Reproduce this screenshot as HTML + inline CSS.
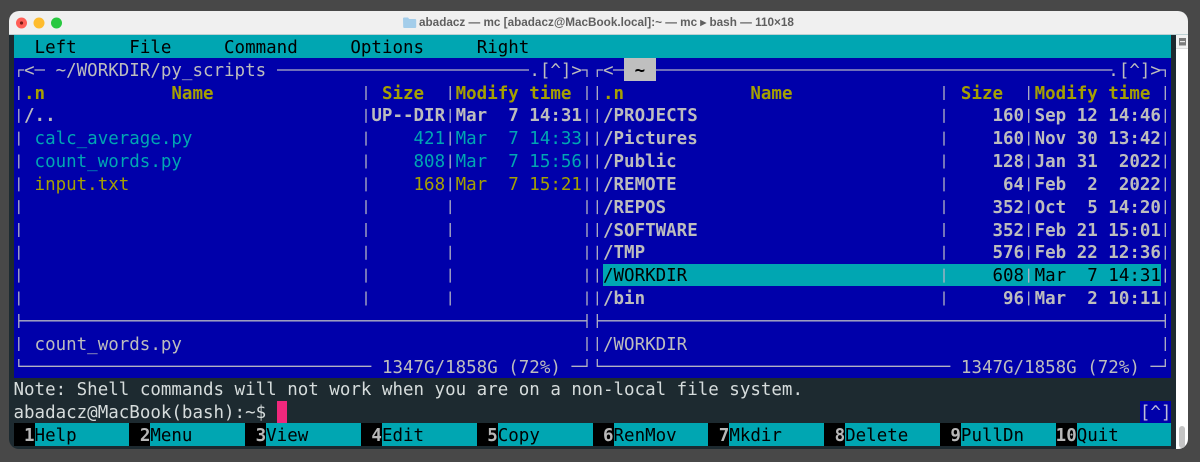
<!DOCTYPE html>
<html><head><meta charset="utf-8"><title>mc</title>
<style>
html,body{margin:0;padding:0;width:1200px;height:462px;overflow:hidden;background:#484848}
div,span,svg{position:absolute}
.win{left:9px;top:11px;width:1179px;height:438px;border-radius:10px;background:#1d2a30;overflow:hidden}
.title{left:0;top:0;width:1179px;height:24px;background:#f0f0f0;border-bottom:1px solid #bcd0d2;box-sizing:border-box}
.ttext{left:410px;top:4px;font:bold 11.72px/16px "Liberation Sans",sans-serif;color:#5f5f5f;white-space:pre}
.sb{left:1167px;top:24px;width:12px;height:414px;background:#fff}
.r{left:0;width:1200px;height:23px;margin-top:2px;font:17.49px/22.83px "DejaVu Sans Mono","Liberation Mono",monospace;color:#bdbdbd;white-space:pre}
.r span{left:calc(var(--c)*10.527px + 13.5px);top:0}
.y{color:#a5a000;font-weight:bold}
.c{color:#00a6b2}
.o{color:#a5a000}
.b{font-weight:bold}
.k{color:#000}
.n{color:#d6dcdc}
.num{color:#b8b8b8;font-weight:bold}
</style></head>
<body>
<div class="win">
  <div class="title"></div>
  <div class="ttext">abadacz — mc [abadacz@MacBook.local]:~ — mc ▸ bash — 110×18</div>
  <div class="sb"></div>
</div>
<svg style="left:0;top:0" width="1200" height="462">
  <circle cx="21.5" cy="23" r="5.5" fill="#ff5f57"/><circle cx="21.5" cy="23" r="1.6" fill="#7a1a14"/>
  <circle cx="39" cy="23" r="5.5" fill="#febc2e"/>
  <circle cx="56.5" cy="23" r="5.5" fill="#28c840"/>
  <path d="M403 18.5a1 1 0 0 1 1-1h4l1.2 1.5h6a1 1 0 0 1 1 1v7a1 1 0 0 1-1 1h-11a1 1 0 0 1-1-1z" fill="#a3cdea"/>
  <rect x="1176" y="35" width="12" height="13" fill="#f2f2f2"/>
  <rect x="1176" y="48" width="12" height="1" fill="#dcdcdc"/>
  <rect x="1179" y="38" width="7" height="7.5" fill="#7c7c7c"/><rect x="1180" y="41" width="5" height="1.2" fill="#e8e8e8"/>
  <rect x="1179" y="426" width="6" height="22" rx="3" fill="#c4c4c4"/>
</svg>

<!-- backgrounds -->
<div style="left:13.5px;top:35px;width:1157.5px;height:23px;background:#00a6b2"></div>
<div style="left:13.5px;top:58px;width:1157.5px;height:319.5px;background:#0000aa"></div>
<div style="left:624px;top:58px;width:31.6px;height:23px;background:#bfbfbf"></div>
<div style="left:603px;top:264px;width:558px;height:22px;background:#00a6b2"></div>
<div style="left:1140px;top:400.6px;width:31px;height:22.8px;background:#0000aa"></div>
<div style="left:276.7px;top:400.6px;width:10px;height:22.8px;background:#f0287c"></div>
<div style="left:13.5px;top:423.4px;width:1157.5px;height:22.8px;background:#00a6b2"></div>
<div style="left:13.5px;top:423.4px;width:21px;height:22.8px;background:#000"></div>
<div style="left:129.3px;top:423.4px;width:21px;height:22.8px;background:#000"></div>
<div style="left:245.1px;top:423.4px;width:21px;height:22.8px;background:#000"></div>
<div style="left:360.9px;top:423.4px;width:21px;height:22.8px;background:#000"></div>
<div style="left:476.7px;top:423.4px;width:21px;height:22.8px;background:#000"></div>
<div style="left:592.5px;top:423.4px;width:21px;height:22.8px;background:#000"></div>
<div style="left:708.3px;top:423.4px;width:21px;height:22.8px;background:#000"></div>
<div style="left:824.1px;top:423.4px;width:21px;height:22.8px;background:#000"></div>
<div style="left:939.9px;top:423.4px;width:21px;height:22.8px;background:#000"></div>
<div style="left:1055.7px;top:423.4px;width:21px;height:22.8px;background:#000"></div>

<!-- frame lines -->
<svg style="left:0;top:0" width="1200" height="462" fill="none" stroke="#b2b2c4" stroke-width="1.3">
  <path d="M18.8 77V70H24M34.5 70H45M277 70H529M581.5 70H587V77"/>
  <path d="M597.3 77V70H603M613 70H624M655.6 70H1112.5M1159 70H1165.3V77"/>
  <path d="M18.8 314V328M18.8 320.8H587M587 314V328M597.3 314V328M597.3 320.8H1165.3M1165.3 314V328"/>
  <path d="M18.8 359V366.3H371.4M571.4 366.3H587V359M597.3 359V366.3H950.4M1150.4 366.3H1165.3V359"/>
  <path stroke-dasharray="14 8.83" d="M18.8 86V306M366 86V306M450.2 86V306M587 86V306M597.3 86V306M944 86V306M1028.7 86V306M1165.3 86V306"/>
  <path d="M18.8 337V351M587 337V351M597.3 337V351M1165.3 337V351"/>
</svg>

<!-- row 0 menu -->
<div class="r k" style="top:35px"><span style="--c:2">Left</span><span style="--c:11">File</span><span style="--c:20">Command</span><span style="--c:32">Options</span><span style="--c:44">Right</span></div>
<!-- row 1 -->
<div class="r" style="top:57.83px"><span style="--c:1">&lt;</span><span style="--c:4">~/WORKDIR/py_scripts</span><span style="--c:49">.[^]&gt;</span><span style="--c:56">&lt;</span><span class="k b" style="--c:59">~</span><span style="--c:104">.[^]&gt;</span></div>
<!-- row 2 -->
<div class="r y" style="top:80.66px"><span style="--c:1">.n</span><span style="--c:15">Name</span><span style="--c:35">Size</span><span style="--c:42">Modify time</span><span style="--c:56">.n</span><span style="--c:70">Name</span><span style="--c:90">Size</span><span style="--c:97">Modify time</span></div>
<!-- row 3 -->
<div class="r b" style="top:103.49px"><span style="--c:1">/..</span><span style="--c:34">UP--DIR</span><span style="--c:42">Mar  7 14:31</span><span style="--c:56">/PROJECTS</span><span style="--c:93">160</span><span style="--c:97">Sep 12 14:46</span></div>
<!-- row 4 -->
<div class="r" style="top:126.32px"><span class="c" style="--c:2">calc_average.py</span><span class="c" style="--c:38">421</span><span class="c" style="--c:42">Mar  7 14:33</span><span class="b" style="--c:56">/Pictures</span><span class="b" style="--c:93">160</span><span class="b" style="--c:97">Nov 30 13:42</span></div>
<!-- row 5 -->
<div class="r" style="top:149.15px"><span class="c" style="--c:2">count_words.py</span><span class="c" style="--c:38">808</span><span class="c" style="--c:42">Mar  7 15:56</span><span class="b" style="--c:56">/Public</span><span class="b" style="--c:93">128</span><span class="b" style="--c:97">Jan 31  2022</span></div>
<!-- row 6 -->
<div class="r" style="top:171.98px"><span class="o" style="--c:2">input.txt</span><span class="o" style="--c:38">168</span><span class="o" style="--c:42">Mar  7 15:21</span><span class="b" style="--c:56">/REMOTE</span><span class="b" style="--c:94">64</span><span class="b" style="--c:97">Feb  2  2022</span></div>
<!-- row 7-9 -->
<div class="r b" style="top:194.81px"><span style="--c:56">/REPOS</span><span style="--c:93">352</span><span style="--c:97">Oct  5 14:20</span></div>
<div class="r b" style="top:217.64px"><span style="--c:56">/SOFTWARE</span><span style="--c:93">352</span><span style="--c:97">Feb 21 15:01</span></div>
<div class="r b" style="top:240.47px"><span style="--c:56">/TMP</span><span style="--c:93">576</span><span style="--c:97">Feb 22 12:36</span></div>
<!-- row 10 -->
<div class="r k" style="top:263.3px"><span style="--c:56">/WORKDIR</span><span style="--c:93">608</span><span style="--c:97">Mar  7 14:31</span></div>
<!-- row 11 -->
<div class="r b" style="top:286.13px"><span style="--c:56">/bin</span><span style="--c:94">96</span><span style="--c:97">Mar  2 10:11</span></div>
<!-- row 13 -->
<div class="r" style="top:331.79px"><span style="--c:2">count_words.py</span><span style="--c:56">/WORKDIR</span></div>
<!-- row 14 -->
<div class="r" style="top:354.62px"><span style="--c:35">1347G/1858G (72%)</span><span style="--c:90">1347G/1858G (72%)</span></div>
<!-- row 15 -->
<div class="r n" style="top:377.45px"><span style="--c:0">Note: Shell commands will not work when you are on a non-local file system.</span></div>
<!-- row 16 -->
<div class="r n" style="top:400.28px"><span style="--c:0">abadacz@MacBook(bash):~$</span><span style="--c:107;color:#bdbdd8">[^]</span></div>
<!-- row 17 -->
<div class="r k" style="top:423.11px">
<span class="num" style="--c:1">1</span><span style="--c:2">Help</span>
<span class="num" style="--c:12">2</span><span style="--c:13">Menu</span>
<span class="num" style="--c:23">3</span><span style="--c:24">View</span>
<span class="num" style="--c:34">4</span><span style="--c:35">Edit</span>
<span class="num" style="--c:45">5</span><span style="--c:46">Copy</span>
<span class="num" style="--c:56">6</span><span style="--c:57">RenMov</span>
<span class="num" style="--c:67">7</span><span style="--c:68">Mkdir</span>
<span class="num" style="--c:78">8</span><span style="--c:79">Delete</span>
<span class="num" style="--c:89">9</span><span style="--c:90">PullDn</span>
<span class="num" style="--c:99">10</span><span style="--c:101">Quit</span>
</div>
</body></html>
